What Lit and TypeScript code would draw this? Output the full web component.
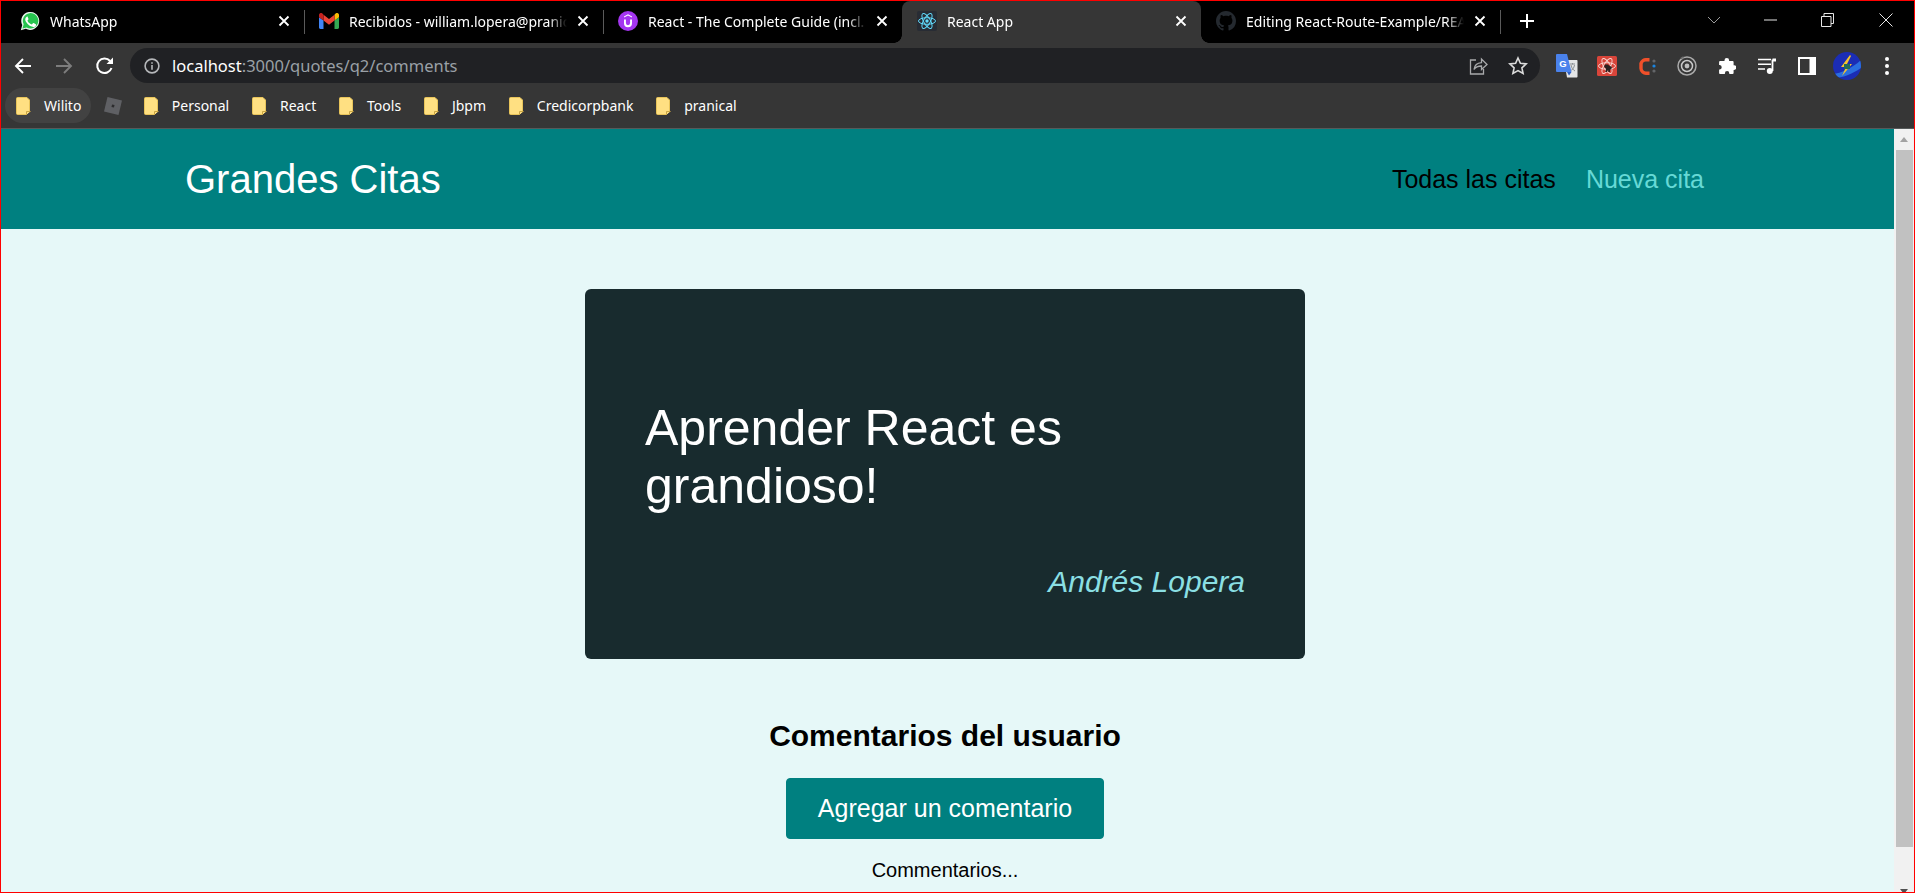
import { LitElement, html, css, svg } from 'lit';
import { customElement } from 'lit/decorators.js';

const closeIcon = svg`<svg width="12" height="12" viewBox="0 0 12 12"><path d="M1.5 1.5l9 9M10.5 1.5l-9 9" stroke="#fff" stroke-width="1.8"/></svg>`;

const favicons: Record<string, unknown> = {
  whatsapp: svg`<svg width="22" height="22" viewBox="0 0 24 24">
    <path d="M1 23l1.7-6.1A10.8 10.8 0 1 1 7 21.3z" fill="#e8f5ec"/>
    <path d="M3 21l1.4-5A9.3 9.3 0 1 1 8 19.8z" fill="#27c44f"/>
    <path d="M8.7 6.9c-.3 0-.8.1-1.2.6-.5.5-1.2 1.3-1.2 2.8s1.100 3.100 1.300 3.300c.2.200 2.200 3.500 5.400 4.700 2.700 1 3.200.8 3.800.8s1.900-.8 2.200-1.500c.3-.8.300-1.400.2-1.500-.1-.2-.3-.3-.7-.5l-2.200-1.100c-.3-.1-.5-.2-.8.200l-1 1.200c-.2.200-.4.300-.7.100-.4-.2-1.500-.5-2.800-1.700-1-.9-1.700-2-1.900-2.400-.2-.3 0-.5.200-.7l.5-.6c.2-.2.200-.4.300-.6.100-.2.100-.4 0-.6l-1-2.400c-.2-.6-.5-.6-.8-.6z" fill="#fff"/>
  </svg>`,
  gmail: svg`<svg width="20" height="16" viewBox="0 0 20 16">
    <path d="M1.400 16H4.500V7.600L0 4.200V14.600C0 15.400.6 16 1.400 16z" fill="#4285f4"/>
    <path d="M15.500 16h3.100c.8 0 1.400-.6 1.400-1.400V4.200l-4.500 3.400z" fill="#34a853"/>
    <path d="M15.500 1.800v5.800L20 4.200V2.100c0-1.800-2-2.800-3.400-1.700z" fill="#fbbc04"/>
    <path d="M4.500 7.600V1.800L10 6l5.500-4.200v5.800L10 11.700z" fill="#ea4335"/>
    <path d="M0 2.100v2.100l4.500 3.400V1.800L3.400.4C2 -.7 0 .3 0 2.100z" fill="#c5221f"/>
  </svg>`,
  udemy: svg`<svg width="20" height="20" viewBox="0 0 20 20">
    <circle cx="10" cy="10" r="10" fill="#a435f0"/>
    <path d="M6 8.500v3.700a4 4 0 0 0 8 0V8.500h-1.900v3.600a2.100 2.100 0 0 1-4.200 0V8.500z" fill="#fff"/>
    <path d="M10 3.200l4 2.200v1.100l-4-2.100-4 2.100V5.400z" fill="#fff"/>
  </svg>`,
  react: svg`<svg width="20" height="20" viewBox="0 0 20 20">
    <rect width="20" height="20" rx="2" fill="#282c34"/>
    <g fill="none" stroke="#61dafb" stroke-width="1">
      <ellipse cx="10" cy="10" rx="8.500" ry="3.300"/>
      <ellipse cx="10" cy="10" rx="8.500" ry="3.300" transform="rotate(60 10 10)"/>
      <ellipse cx="10" cy="10" rx="8.500" ry="3.300" transform="rotate(120 10 10)"/>
    </g>
    <circle cx="10" cy="10" r="1.700" fill="#61dafb"/>
  </svg>`,
  github: svg`<svg width="20" height="20" viewBox="0 0 16 16">
    <path fill="#24292f" d="M8 0C3.580 0 0 3.580 0 8c0 3.540 2.290 6.530 5.470 7.590.4.070.55-.17.55-.38 0-.19-.01-.82-.01-1.490-2.010.37-2.530-.49-2.690-.94-.09-.23-.48-.94-.82-1.130-.28-.15-.68-.52-.01-.53.63-.01 1.080.58 1.230.82.720 1.210 1.870.870 2.330.660.070-.520.280-.870.510-1.070-1.780-.2-3.640-.890-3.640-3.950 0-.870.310-1.590.820-2.150-.080-.2-.360-1.020.080-2.120 0 0 .670-.210 2.200.820.640-.180 1.320-.270 2-.270s1.360.090 2 .270c1.530-1.040 2.200-.820 2.200-.820.440 1.100.160 1.920.080 2.120.510.560.820 1.270.820 2.150 0 3.070-1.870 3.750-3.650 3.950.290.250.540.730.540 1.480 0 1.070-.010 1.930-.010 2.200 0 .210.150.460.550.380A8.010 8.010 0 0 0 16 8c0-4.420-3.580-8-8-8z"/>
  </svg>`,
};

const folderIcon = svg`<svg width="15" height="18" viewBox="0 0 15 18">
  <path d="M1.500.5h9.500l2.500 2.500v11.500l-3 3h-9a1 1 0 0 1-1-1v-15a1 1 0 0 1 1-1z" fill="#ffe082" stroke="#e8c45a" stroke-width="1"/>
  <path d="M10.500 17.500v-3h4" fill="#ffe082" stroke="#c9a443" stroke-width="1"/>
</svg>`;

const robloxIcon = svg`<svg width="20" height="20" viewBox="0 0 20 20">
  <path d="M4.500 1L19 4.500 15.500 19 1 15.500z" fill="#5f6064"/>
  <rect x="8.700" y="8.700" width="2.600" height="2.600" fill="#2c2c2e" transform="rotate(14 10 10)"/>
</svg>`;

const toolbarIcons: Record<string, unknown> = {
  back: svg`<svg width="18" height="18" viewBox="0 0 18 18"><path d="M17 9H2M9 2L2 9l7 7" fill="none" stroke="#fff" stroke-width="1.900"/></svg>`,
  forward: svg`<svg width="18" height="18" viewBox="0 0 18 18"><path d="M1 9h15M9 2l7 7-7 7" fill="none" stroke="#7d7d7d" stroke-width="1.900"/></svg>`,
  reload: svg`<svg width="20" height="20" viewBox="0 0 20 20"><path d="M16.500 12a7.300 7.300 0 1 1-1.400-7" fill="none" stroke="#fff" stroke-width="2"/><path d="M18 1.500V8h-6.500z" fill="#fff"/></svg>`,
  info: svg`<svg width="16" height="16" viewBox="0 0 16 16"><circle cx="8" cy="8" r="6.900" fill="none" stroke="#b5b7ba" stroke-width="1.600"/><path d="M7.200 7h1.600v4.800H7.200zM7.200 4.200h1.600v1.600H7.200z" fill="#b5b7ba"/></svg>`,
  share: svg`<svg width="20" height="20" viewBox="0 0 20 20"><path d="M8 4H2.500v14h13v-5" fill="none" stroke="#a8a9ab" stroke-width="1.300"/><path d="M6 13.500c.5-4 3-6.500 7.500-6.800V3l5.500 5.500-5.500 5V10c-3 0-5.800.8-7.500 3.500z" fill="none" stroke="#a8a9ab" stroke-width="1.300"/></svg>`,
  star: svg`<svg width="20" height="20" viewBox="0 0 20 20"><path d="M10 2l2.400 5.300 5.800.6-4.300 3.900 1.200 5.700-5.100-2.900-5.100 2.900 1.200-5.700L1.800 7.900l5.800-.6z" fill="none" stroke="#dcdcdc" stroke-width="1.600"/></svg>`,
  translate: svg`<svg width="22" height="24" viewBox="0 0 22 24">
    <path d="M8 6h12.500c.6 0 1 .4 1 1v15.500c0 .6-.4 1-1 1H11z" fill="#e4e5e6"/>
    <path d="M14 10h5M16.500 9v1.500M15 11c.5 3 2.200 5 4 6M18.500 11c-.5 3-2 5-4.500 6" fill="none" stroke="#8b9094" stroke-width="1"/>
    <path d="M1 0h10l4.500 18H1a1 1 0 0 1-1-1V1a1 1 0 0 1 1-1z" fill="#4a82ec"/>
    <path d="M11 18h4.500L13 21.500z" fill="#2d5fc2"/>
    <text x="3.200" y="12.500" font-family="Liberation Sans" font-size="9.500" font-weight="700" fill="#fff">G</text>
  </svg>`,
  atom: svg`<svg width="20" height="20" viewBox="0 0 20 20">
    <rect width="20" height="20" rx="1.500" fill="#d9453a"/>
    <g fill="none" stroke="#f8d9d5" stroke-width=".9">
      <ellipse cx="10" cy="10" rx="8.500" ry="3.300"/>
      <ellipse cx="10" cy="10" rx="8.500" ry="3.300" transform="rotate(60 10 10)"/>
      <ellipse cx="10" cy="10" rx="8.500" ry="3.300" transform="rotate(120 10 10)"/>
    </g>
    <path d="M8 8.500h3l1 1 3 1.500-1 3-1-1v3h-1.500l-.5-2-1 2H8.500l.5-3.500-2-1.500z" fill="#2b2221"/>
  </svg>`,
  codeium: svg`<svg width="18" height="22" viewBox="0 0 18 22">
    <path d="M11.500 4.800H8.500A5 5 0 0 0 3 8.500v5A5 5 0 0 0 8.500 18.200h3" fill="none" stroke="#f0502a" stroke-width="3.400"/>
    <circle cx="16" cy="6" r="1.600" fill="#636568"/>
    <circle cx="16" cy="11" r="1.600" fill="#1a84e0"/>
    <circle cx="16" cy="16" r="1.600" fill="#636568"/>
  </svg>`,
  target: svg`<svg width="20" height="20" viewBox="0 0 20 20" fill="none">
    <circle cx="10" cy="10" r="9" stroke="#a9a9a9" stroke-width="1.500"/>
    <circle cx="10" cy="10" r="5.500" stroke="#c9c9c9" stroke-width="1.500"/>
    <circle cx="10" cy="10" r="2.400" fill="#bdbdbd"/>
    <path d="M4 2.500l2.500-1.500" stroke="#6c6c6c" stroke-width="1.500"/>
  </svg>`,
  puzzle: svg`<svg width="18" height="18" viewBox="0 0 18 18"><path fill="#fff" d="M6.500 3.200a2.300 2.300 0 0 1 4.600 0v.9h3.600c.5 0 .9.400.9.900v3.300h.5a2.300 2.300 0 0 1 0 4.600h-.5v3.200c0 .5-.4.900-.9.900h-3.400v-.8a2.200 2.200 0 0 0-4.400 0v.8H2c-.5 0-.9-.4-.9-.9v-3.500h.8a2.300 2.300 0 0 0 0-4.500h-.8V5c0-.5.400-.9.900-.9h4.500z"/></svg>`,
  queue: svg`<svg width="20" height="18" viewBox="0 0 20 18">
    <path d="M1 2.500h13M1 7.200h13M1 12h7" stroke="#fff" stroke-width="1.500"/>
    <path d="M15.500 2.500V14" stroke="#fff" stroke-width="1.800"/>
    <path d="M15.500 1.500h3.500v3h-3.500z" fill="#fff"/>
    <circle cx="12.800" cy="14" r="3" fill="#fff"/>
  </svg>`,
  sidebar: svg`<svg width="18" height="18" viewBox="0 0 18 18"><rect width="18" height="18" fill="#fff"/><rect x="2" y="2" width="9.500" height="14" fill="#363636"/></svg>`,
  avatar: svg`<svg width="28" height="28" viewBox="0 0 28 28">
    <defs><clipPath id="av"><circle cx="14" cy="14" r="14"/></clipPath></defs>
    <g clip-path="url(#av)">
      <rect width="28" height="28" fill="#1b2db5"/>
      <path d="M0 22c8-1 18-5 28-14v8c-9 6-18 10-28 10z" fill="#2a6fe0"/>
      <path d="M17 3L8 15h5l-4 9 10-12h-5l4-8z" fill="#f5c42c"/>
      <path d="M11 12h6v5h-6z" fill="#1f6b5a"/>
    </g>
  </svg>`,
  menu: svg`<svg width="6" height="20" viewBox="0 0 6 20"><circle cx="3" cy="3" r="2" fill="#fff"/><circle cx="3" cy="10" r="2" fill="#fff"/><circle cx="3" cy="17" r="2" fill="#fff"/></svg>`,
};

const tabs = [
  { icon: 'whatsapp', title: 'WhatsApp' },
  { icon: 'gmail', title: 'Recibidos - william.lopera@pranical.com - Gmail' },
  { icon: 'udemy', title: 'React - The Complete Guide (incl. Hooks, React Router, Redux)' },
  { icon: 'react', title: 'React App', active: true },
  { icon: 'github', title: 'Editing React-Route-Example/README.md at main' },
];

const bookmarks = ['Personal', 'React', 'Tools', 'Jbpm', 'Credicorpbank', 'pranical'];

@customElement('browser-bar')
export class BrowserBar extends LitElement {
  static styles = css`
    :host {
      display: block;
      font-family: 'Noto Sans', 'Open Sans', sans-serif;
      color: #fff;
    }
    .strip {
      display: flex;
      align-items: stretch;
      height: 42px;
      background: #000;
      padding-left: 4px;
    }
    .tab {
      position: relative;
      display: flex;
      align-items: center;
      flex: none;
      box-sizing: border-box;
      width: 299px;
      padding: 0 14px 2px 15px;
      font-size: 14px;
    }
    .tab.sep::after {
      content: '';
      position: absolute;
      right: -1px;
      top: 9px;
      bottom: 9px;
      width: 1px;
      background: #5a5a5a;
    }
    .tab.active {
      background: #363636;
      border-radius: 8px 8px 0 0;
    }
    .tab.active::before,
    .tab.active::after {
      content: '';
      position: absolute;
      bottom: 0;
      top: auto;
      width: 8px;
      height: 8px;
    }
    .tab.active::before {
      left: -8px;
      right: auto;
      background: radial-gradient(circle at 0 0, #000 7.5px, #363636 8px);
    }
    .tab.active::after {
      right: -8px;
      left: auto;
      background: radial-gradient(circle at 100% 0, #000 7.5px, #363636 8px);
    }
    .favicon {
      display: flex;
      align-items: center;
      justify-content: center;
      flex: none;
      width: 20px;
      height: 20px;
      margin-right: 10px;
    }
    .title {
      flex: 1;
      min-width: 0;
      overflow: hidden;
      white-space: nowrap;
      -webkit-mask-image: linear-gradient(to left, transparent 0, #000 18px);
      mask-image: linear-gradient(to left, transparent 0, #000 18px);
    }
    .close {
      display: flex;
      flex: none;
      margin-left: 10px;
    }
    .plus {
      flex: none;
      display: flex;
      align-items: center;
      margin-left: 19px;
      padding-bottom: 2px;
    }
    .window {
      display: flex;
      align-items: center;
      margin-left: auto;
      margin-right: 21px;
      padding-bottom: 4px;
    }
    .window svg {
      display: block;
    }
    .window .chevron {
      margin-right: 43px;
    }
    .window .min {
      margin-right: 44px;
    }
    .window .max {
      margin-right: 45px;
    }
    .toolbar {
      display: flex;
      align-items: center;
      height: 40px;
      background: #363636;
      box-sizing: border-box;
    }
    .nav {
      display: flex;
      align-items: center;
      justify-content: center;
      flex: none;
      width: 41px;
      height: 40px;
      padding-top: 5px;
      box-sizing: border-box;
    }
    .nav:first-child {
      margin-left: 1px;
    }
    .omnibox {
      display: flex;
      align-items: center;
      flex: none;
      box-sizing: border-box;
      width: 1410px;
      height: 35px;
      margin: 5px 0 0 5px;
      padding: 0 12px 0 14px;
      border-radius: 18px;
      background: #202124;
      font-size: 16.5px;
    }
    .url {
      margin-left: 12px;
      color: #9aa0a6;
      flex: 1;
    }
    .url b {
      font-weight: 400;
      color: #fff;
    }
    .omni-action {
      display: flex;
      margin-left: 20px;
    }
    .extensions {
      display: flex;
      align-items: center;
      margin-left: 7px;
      padding-top: 5px;
    }
    .ext {
      display: flex;
      align-items: center;
      justify-content: center;
      width: 40px;
    }
    .bookmarks {
      display: flex;
      align-items: center;
      height: 45px;
      background: #363636;
      border-bottom: 1px solid #565a5a;
      padding-left: 4px;
      font-size: 14px;
    }
    .mark {
      display: flex;
      align-items: center;
      height: 35px;
      padding: 0 11.4px;
      border-radius: 18px;
    }
    .mark.pill {
      background: #424242;
      padding: 0 10px 0 11px;
    }
    .mark svg {
      display: block;
      margin-right: 13px;
    }
    .mark.bare {
      padding: 0 9px 0 12px;
    }
    .mark.bare svg {
      margin-right: 0;
    }
  `;

  render() {
    const activeIndex = tabs.findIndex((t) => t.active);
    return html`
      <div class="strip">
        ${tabs.map(
          (t, i) => html`
            <div class="tab ${t.active ? 'active' : ''} ${!t.active && i + 1 !== activeIndex ? 'sep' : ''}">
              <span class="favicon">${favicons[t.icon]}</span>
              <span class="title">${t.title}</span>
              <span class="close">${closeIcon}</span>
            </div>
          `
        )}
        <span class="plus">
          <svg width="16" height="16" viewBox="0 0 16 16"><path d="M8 1v14M1 8h14" stroke="#fff" stroke-width="2"/></svg>
        </span>
        <div class="window">
          <svg class="chevron" width="14" height="8" viewBox="0 0 14 8"><path d="M1 1l6 6 6-6" fill="none" stroke="#9a9a9a"/></svg>
          <svg class="min" width="13" height="2" viewBox="0 0 13 2"><path d="M0 1h13" stroke="#e6e6e6"/></svg>
          <svg class="max" width="13" height="14" viewBox="0 0 13 14"><path d="M.5 3.500h9.500v10H.5zM3 3.500v-3h9.500v10H10" fill="none" stroke="#e6e6e6"/></svg>
          <svg width="14" height="14" viewBox="0 0 14 14"><path d="M.5.5l13 13M13.500.5l-13 13" stroke="#e6e6e6"/></svg>
        </div>
      </div>
      <div class="toolbar">
        <span class="nav">${toolbarIcons.back}</span>
        <span class="nav">${toolbarIcons.forward}</span>
        <span class="nav">${toolbarIcons.reload}</span>
        <div class="omnibox">
          ${toolbarIcons.info}
          <span class="url"><b>localhost</b>:3000/quotes/q2/comments</span>
          <span class="omni-action">${toolbarIcons.share}</span>
          <span class="omni-action">${toolbarIcons.star}</span>
        </div>
        <div class="extensions">
          ${['translate', 'atom', 'codeium', 'target', 'puzzle', 'queue', 'sidebar', 'avatar', 'menu'].map(
            (k) => html`<span class="ext">${toolbarIcons[k]}</span>`
          )}
        </div>
      </div>
      <div class="bookmarks">
        <span class="mark pill">${folderIcon}Wilito</span>
        <span class="mark bare">${robloxIcon}</span>
        ${bookmarks.map((b) => html`<span class="mark">${folderIcon}${b}</span>`)}
      </div>
    `;
  }
}

@customElement('quote-page')
export class QuotePage extends LitElement {
  static styles = css`
    :host {
      display: block;
      height: 100%;
      overflow: hidden;
      background: #e6f8f8;
      font-family: 'Liberation Sans', Arial, sans-serif;
      color: #000;
    }
    .header {
      display: flex;
      align-items: center;
      justify-content: space-between;
      height: 100px;
      padding: 0 190px 0 184px;
      background: #008080;
    }
    .logo {
      font-size: 40px;
      color: #fff;
    }
    .links {
      display: flex;
      gap: 30px;
      padding-top: 1px;
      font-size: 25px;
    }
    .links .current {
      color: #66d9d6;
    }
    .main {
      padding: 60px 5px 0 0;
      display: flex;
      flex-direction: column;
      align-items: center;
      text-align: center;
    }
    .quote {
      box-sizing: border-box;
      width: 720px;
      margin: 0 0 60px;
      padding: 60px;
      border-radius: 6px;
      background: #182b2e;
      color: #fff;
      text-align: left;
    }
    .quote p {
      margin: 50px 0;
      font-size: 50px;
    }
    .quote figcaption {
      font-size: 30px;
      font-style: italic;
      text-align: right;
      color: #8adfe3;
    }
    h2 {
      margin: 0 0 25px;
      font-size: 30px;
    }
    .btn {
      padding: 15px 30.5px;
      border: 1px solid #008080;
      border-radius: 4px;
      background: #008080;
      color: #fff;
      font: inherit;
      font-size: 25px;
    }
    .comments {
      margin-top: 20px;
      font-size: 20px;
    }
  `;

  render() {
    return html`
      <header class="header">
        <div class="logo">Grandes Citas</div>
        <nav class="links">
          <span>Todas las citas</span>
          <span class="current">Nueva cita</span>
        </nav>
      </header>
      <main class="main">
        <figure class="quote">
          <p>Aprender React es grandioso!</p>
          <figcaption>Andrés Lopera</figcaption>
        </figure>
        <h2>Comentarios del usuario</h2>
        <button class="btn">Agregar un comentario</button>
        <div class="comments">Commentarios...</div>
      </main>
    `;
  }
}

@customElement('app-root')
export class AppRoot extends LitElement {
  static styles = css`
    :host {
      display: block;
    }
    .frame {
      display: flex;
      flex-direction: column;
      box-sizing: border-box;
      height: 100vh;
      border: 1px solid #f00;
      overflow: hidden;
    }
    .viewport {
      display: flex;
      flex: 1;
      min-height: 0;
    }
    quote-page {
      flex: 1;
      min-width: 0;
    }
    .scrollbar {
      display: flex;
      flex-direction: column;
      align-items: center;
      flex: none;
      width: 20px;
      background: #f1f1f1;
    }
    .up {
      margin-top: 8px;
      border: 4.500px solid transparent;
      border-top: 0;
      border-bottom: 5px solid #a3a3a3;
    }
    .thumb {
      width: 17px;
      height: 697px;
      margin: 8px 0 0 0;
      background: #c1c1c1;
    }
    .down {
      margin-top: auto;
      border: 4.500px solid transparent;
      border-bottom: 0;
      border-top: 5px solid #505050;
      margin-bottom: -2px;
    }
  `;

  render() {
    return html`
      <div class="frame">
        <browser-bar></browser-bar>
        <div class="viewport">
          <quote-page></quote-page>
          <div class="scrollbar">
            <span class="up"></span>
            <span class="thumb"></span>
            <span class="down"></span>
          </div>
        </div>
      </div>
    `;
  }
}
